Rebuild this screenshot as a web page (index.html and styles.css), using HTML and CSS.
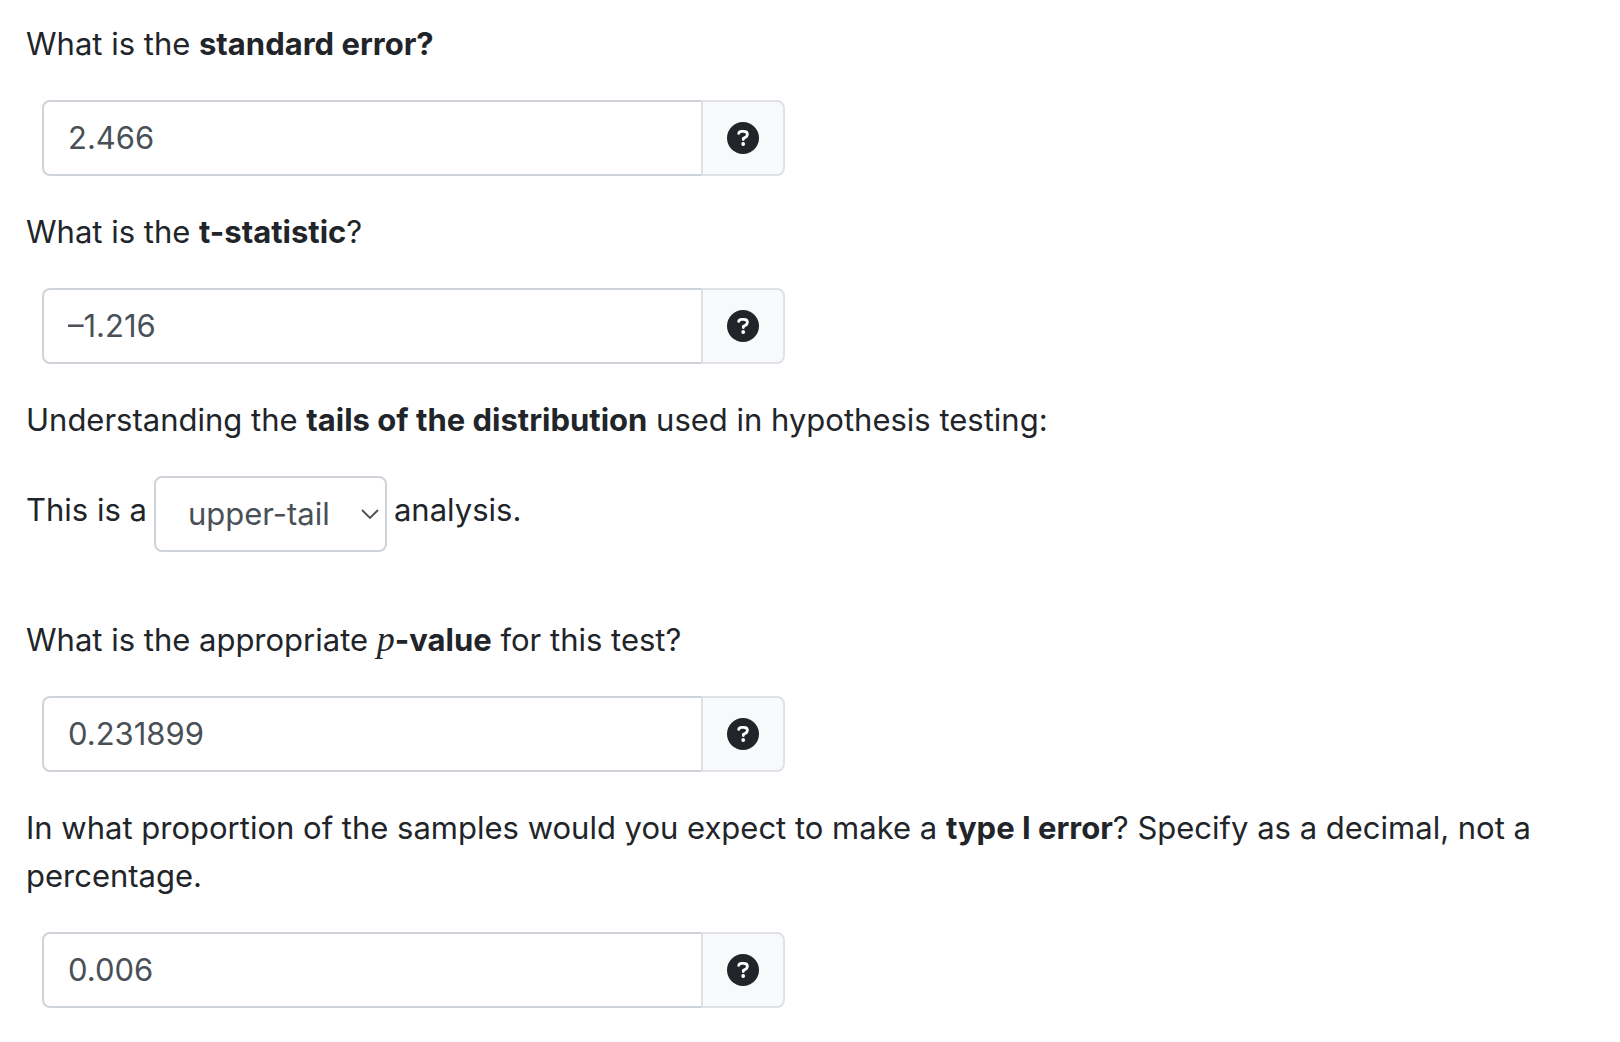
FILE: index.html
```html
<!DOCTYPE html>
<html lang="en">
<head>
  <meta charset="UTF-8">
  <meta name="viewport" content="width=device-width, initial-scale=1.0">
  <title>Hypothesis Testing</title>
  <link rel="stylesheet" href="styles.css">
</head>
<body>
  <svg width="0" height="0" class="defs">
    <symbol id="help-icon" viewBox="0 0 32 32">
      <circle cx="16" cy="16" r="16" fill="#212529"/>
      <path d="M11.700 11.400C12 9.900 13.200 9.300 15 9.300h1.800c2.200 0 3.600 1.200 3.600 3 0 1.300-.7 2.200-1.900 2.900L16.300 16.500v1" fill="none" stroke="#fff" stroke-width="2.800" stroke-linecap="round" stroke-linejoin="round"/>
      <circle cx="16.200" cy="22" r="1.900" fill="#fff"/>
    </symbol>
  </svg>
  <form class="questions">
    <p><label for="standard-error">What is the <strong>standard error?</strong></label></p>
    <div class="input-group">
      <input type="text" id="standard-error" value="2.466">
      <button type="button" aria-label="Help"><svg class="icon"><use href="#help-icon"/></svg></button>
    </div>

    <p><label for="t-statistic">What is the <strong>t-statistic</strong>?</label></p>
    <div class="input-group">
      <input type="text" id="t-statistic" value="–1.216">
      <button type="button" aria-label="Help"><svg class="icon"><use href="#help-icon"/></svg></button>
    </div>

    <p>Understanding the <strong>tails of the distribution</strong> used in hypothesis testing:</p>
    <div class="inline-question">
      <label for="tail">This is a</label>
      <span class="select">
        <select id="tail">
          <option>lower-tail</option>
          <option selected>upper-tail</option>
          <option>two-tail</option>
        </select>
        <svg class="chevron" viewBox="0 0 18 10"><path d="M1 1l8 8 8-8" fill="none" stroke="#495057" stroke-width="1.800"/></svg>
      </span>
      <span>analysis.</span>
    </div>

    <p><label for="p-value">What is the appropriate <i class="math">p</i><strong>-value</strong> for this test?</label></p>
    <div class="input-group">
      <input type="text" id="p-value" value="0.231899">
      <button type="button" aria-label="Help"><svg class="icon"><use href="#help-icon"/></svg></button>
    </div>

    <p><label for="type-error">In what proportion of the samples would you expect to make a <strong>type I error</strong>? Specify as a decimal, not a percentage.</label></p>
    <div class="input-group">
      <input type="text" id="type-error" value="0.006">
      <button type="button" aria-label="Help"><svg class="icon"><use href="#help-icon"/></svg></button>
    </div>
  </form>
</body>
</html>
```
FILE: styles.css
```css
* {
  box-sizing: border-box;
}
body {
  margin: 0;
  background-color: #ffffff;
  color: #212529;
  font-family: Inter, "Liberation Sans", sans-serif;
  font-size: 31px;
  line-height: 48px;
}
.defs {
  position: absolute;
}
.questions {
  padding: 20px 26px 2px;
}
p {
  margin: 0 0 32px;
}
p label {
  display: block;
}
strong {
  font-weight: 700;
}
.math {
  font-family: "Liberation Serif", serif;
  font-size: 36px;
  line-height: 1;
}
.input-group {
  display: flex;
  width: 50%;
  max-width: 743px;
  height: 76px;
  margin: 0 0 32px 16px;
}
.input-group input {
  flex: 1;
  min-width: 0;
  padding: 12px 24px;
  border: 2px solid #ced4da;
  border-right: none;
  border-radius: 8px 0 0 8px;
  background-color: #ffffff;
  color: #495057;
  font: inherit;
}
.input-group button {
  display: flex;
  align-items: center;
  padding: 0 24px;
  border: 2px solid #dee2e6;
  border-radius: 0 8px 8px 0;
  background-color: #f8f9fa;
}
.icon {
  width: 32px;
  height: 32px;
}
.inline-question {
  display: flex;
  align-items: center;
  gap: 7px;
  margin-bottom: 64px;
}
.inline-question > label,
.inline-question > span:last-child {
  padding-bottom: 8px;
}
.select {
  position: relative;
}
.select select {
  display: block;
  width: 233px;
  height: 76px;
  padding: 12px 32px;
  border: 2px solid #ced4da;
  border-radius: 8px;
  background-color: #ffffff;
  color: #495057;
  font: inherit;
  appearance: none;
}
.chevron {
  position: absolute;
  top: 33px;
  right: 8px;
  width: 18px;
  height: 10px;
  pointer-events: none;
}
```
